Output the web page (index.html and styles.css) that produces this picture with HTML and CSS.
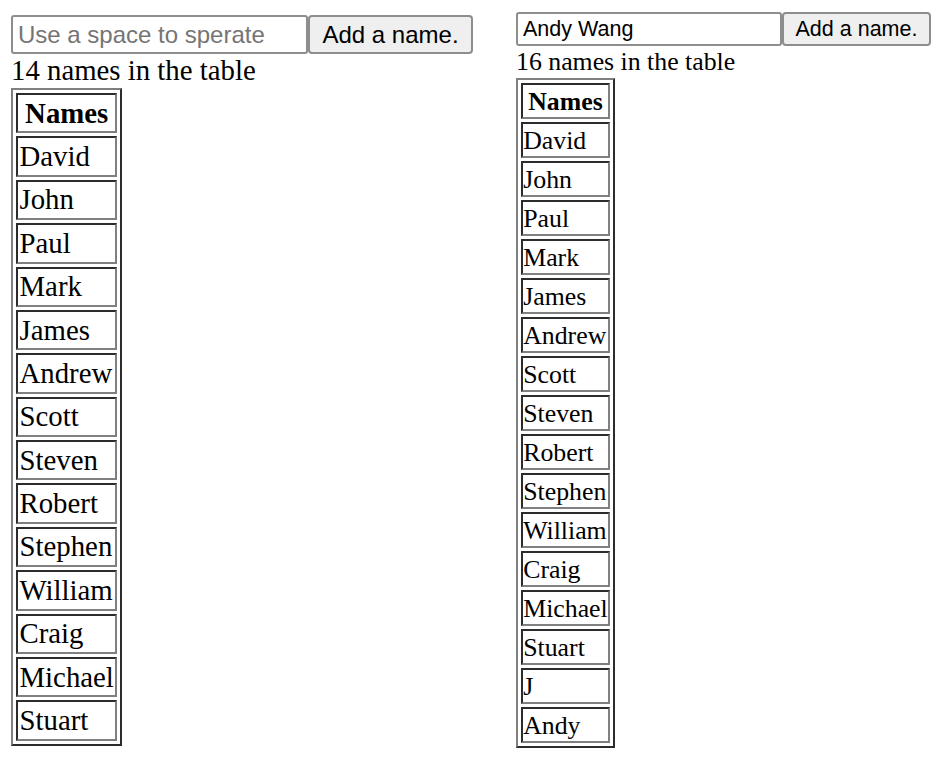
FILE: index.html
```html
<!DOCTYPE html>
<html>
<head>
<meta charset="utf-8">
<link rel="stylesheet" href="styles.css">
</head>
<body>
<div class="page">
  <section class="panel panel-left">
    <div class="form">
      <input class="field" type="text" placeholder="Use a space to sperate">
      <button class="add">Add a name.</button>
    </div>
    <div class="count">14 names in the table</div>
    <table class="names">
      <tr><th>Names</th></tr>
      <tr><td>David</td></tr>
      <tr><td>John</td></tr>
      <tr><td>Paul</td></tr>
      <tr><td>Mark</td></tr>
      <tr><td>James</td></tr>
      <tr><td>Andrew</td></tr>
      <tr><td>Scott</td></tr>
      <tr><td>Steven</td></tr>
      <tr><td>Robert</td></tr>
      <tr><td>Stephen</td></tr>
      <tr><td>William</td></tr>
      <tr><td>Craig</td></tr>
      <tr><td>Michael</td></tr>
      <tr><td>Stuart</td></tr>
    </table>
  </section>
  <section class="panel panel-right">
    <div class="form">
      <input class="field" type="text" value="Andy Wang">
      <button class="add">Add a name.</button>
    </div>
    <div class="count">16 names in the table</div>
    <table class="names">
      <tr><th>Names</th></tr>
      <tr><td>David</td></tr>
      <tr><td>John</td></tr>
      <tr><td>Paul</td></tr>
      <tr><td>Mark</td></tr>
      <tr><td>James</td></tr>
      <tr><td>Andrew</td></tr>
      <tr><td>Scott</td></tr>
      <tr><td>Steven</td></tr>
      <tr><td>Robert</td></tr>
      <tr><td>Stephen</td></tr>
      <tr><td>William</td></tr>
      <tr><td>Craig</td></tr>
      <tr><td>Michael</td></tr>
      <tr><td>Stuart</td></tr>
      <tr><td>J</td></tr>
      <tr><td>Andy</td></tr>
    </table>
  </section>
</div>
</body>
</html>
```

FILE: styles.css
```css
html, body {
  margin: 0;
  padding: 0;
  background: #ffffff;
}

.page {
  display: grid;
  grid-template-columns: 516px 1fr;
  align-items: start;
  font-family: "Liberation Serif", "Times New Roman", serif;
  color: #000000;
}

.panel {
  display: flex;
  flex-direction: column;
  align-items: flex-start;
}

.form {
  display: flex;
}

.field {
  box-sizing: border-box;
  margin: 0;
  font-family: "Liberation Sans", Arial, sans-serif;
  color: #000000;
  background: #ffffff;
  border: 2px solid #8d8d8d;
  border-radius: 3px;
  outline: none;
}

.field::placeholder {
  color: #757575;
}

.add {
  box-sizing: border-box;
  margin: 0;
  font-family: "Liberation Sans", Arial, sans-serif;
  color: #000000;
  background: #efefef;
  border: 2px solid #8d8d8d;
  border-radius: 4px;
  padding: 0;
}

.names {
  border: 2px outset #808080;
}

.names th,
.names td {
  border: 2px inset #808080;
  text-align: left;
}

.names th {
  text-align: center;
  font-weight: bold;
}

/* left panel: ~1.8x scale */
.panel-left {
  padding: 15px 0 0 11px;
}

.panel-left .field {
  width: 297px;
  height: 39px;
  font-size: 24px;
  padding: 0 5px;
}

.panel-left .add {
  width: 165px;
  height: 39px;
  font-size: 24px;
}

.panel-left .count {
  font-size: 28.8px;
  line-height: 33px;
}

.panel-left .names {
  margin-top: 1px;
  border-spacing: 3px;
}

.panel-left .names th,
.panel-left .names td {
  font-size: 28.8px;
  line-height: 33px;
  padding: 1.7px 1.5px;
}

/* right panel: ~1.61x scale */
.panel-right {
  padding-top: 12px;
}

.panel-right .field {
  width: 266px;
  height: 34px;
  font-size: 21.5px;
  padding: 0 5px;
}

.panel-right .add {
  width: 149px;
  height: 34px;
  font-size: 21.5px;
}

.panel-right .count {
  margin-top: 1px;
  font-size: 25.8px;
  line-height: 30px;
}

.panel-right .names {
  margin-top: 1px;
  border-spacing: 3px;
}

.panel-right .names th,
.panel-right .names td {
  font-size: 25.8px;
  line-height: 29px;
  padding: 1.5px 0.2px;
}
```
